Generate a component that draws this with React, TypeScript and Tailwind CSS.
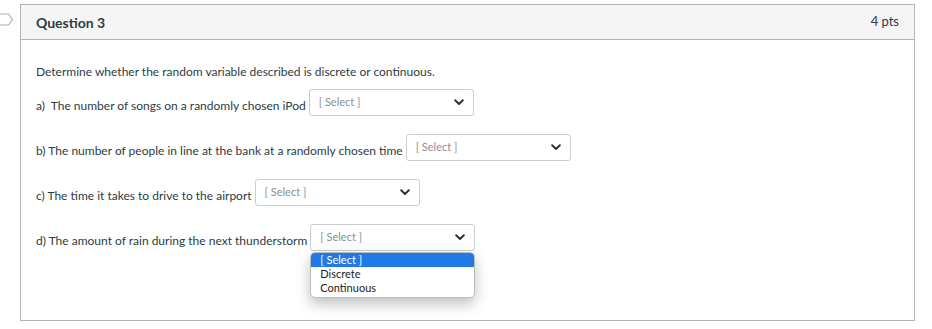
import React from "react";

function Chevron() {
  return (
    <svg width="10" height="7" viewBox="0 0 10 7" className="shrink-0">
      <path d="M1.2 1.3 L5 5 L8.8 1.3" fill="none" stroke="#333" strokeWidth="2" strokeLinecap="round" strokeLinejoin="round" />
    </svg>
  );
}

function SelectBox({ children }: { children?: React.ReactNode }) {
  return (
    <div className="relative ml-[3px]">
      <div className="flex h-[27px] w-[165px] items-center justify-between rounded-[3px] border border-[#c8cdd1] bg-white pl-[9px] pr-[9px]">
        <span className="-mt-[2px] text-[11px] text-[#8a8f94]">[ Select ]</span>
        <Chevron />
      </div>
      {children}
    </div>
  );
}

function Row({ label, open }: { label: string; open?: boolean }) {
  return (
    <div className="flex items-center">
      <span className="whitespace-pre pt-[7px]">{label}</span>
      <SelectBox>
        {open && (
          <div className="absolute left-0 top-[28px] z-10 w-[165px] overflow-hidden rounded-[5px] border border-[#b9bdc2] bg-white pb-[2px] text-[11px] leading-[14px] text-[#222] shadow-[0_6px_14px_rgba(0,0,0,0.25)]">
            <div className="bg-[#1f7ae6] pl-[9px] text-white">[ Select ]</div>
            <div className="pl-[9px]">Discrete</div>
            <div className="pl-[9px]">Continuous</div>
          </div>
        )}
      </SelectBox>
    </div>
  );
}

export default function App() {
  return (
    <div className="relative h-[329px] w-[932px] bg-white pt-[4px] pl-[20px] text-[#2d3b45]" style={{ fontFamily: "Lato, 'Open Sans', sans-serif" }}>
      <svg className="absolute left-0 top-[13px]" width="14" height="13" viewBox="0 0 14 13">
        <path d="M-2 1 H8.5 L12.5 6.5 L8.5 12 H-2" fill="none" stroke="#a6adb3" strokeWidth="1.2" strokeLinejoin="round" />
      </svg>
      <div className="h-[317px] w-[895px] border border-[#b4b4b4]">
        <div className="flex h-[35px] items-center justify-between border-b border-[#b4b4b4] bg-[#f5f5f5] pl-[15px] pr-[15px]">
          <span className="text-[14px] font-bold">Question 3</span>
          <span className="text-[13px]">4 pts</span>
        </div>
        <div className="pl-[15px] pt-[23px] text-[12px] leading-[18px]">
          <p>Determine whether the random variable described is discrete or continuous.</p>
          <div className="mt-[8px] flex flex-col gap-[18px]">
            <Row label="a)  The number of songs on a randomly chosen iPod" />
            <Row label="b) The number of people in line at the bank at a randomly chosen time" />
            <Row label="c) The time it takes to drive to the airport" />
            <Row label="d) The amount of rain during the next thunderstorm" open />
          </div>
        </div>
      </div>
    </div>
  );
}
